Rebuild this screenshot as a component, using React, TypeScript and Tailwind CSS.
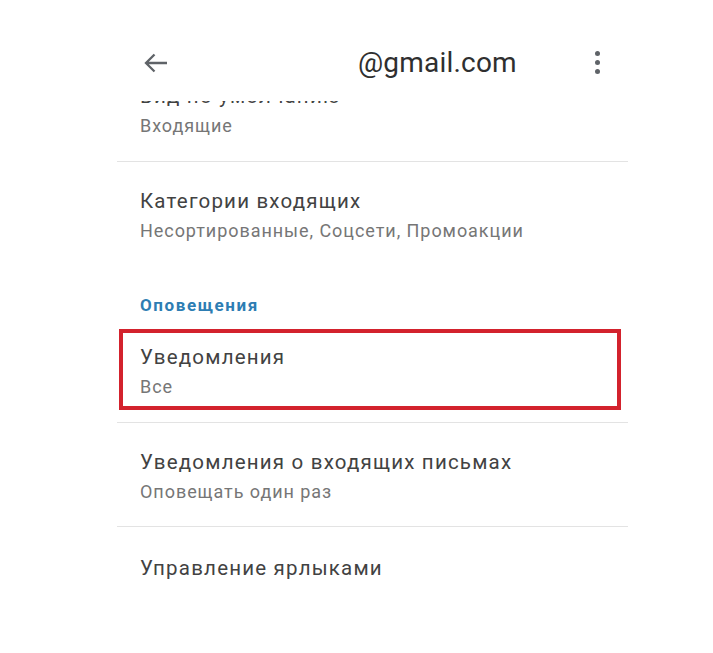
import React from 'react';

type Row = { title: string; sub?: string };

function Item({ row, divider = true, className = 'pt-[25px] pb-[20px]' }: { row: Row; divider?: boolean; className?: string }) {
  return (
    <div className={`${divider ? 'border-t border-[#e3e3e3]' : ''} pl-[23px] ${className}`}>
      <div className="text-[20.5px] leading-[29px] tracking-[1.2px] text-[#424242]">{row.title}</div>
      {row.sub && <div className="text-[18px] leading-[29px] tracking-[0.95px] text-[#767676]">{row.sub}</div>}
    </div>
  );
}

export default function App() {
  return (
    <div className="h-[653px] w-full overflow-hidden bg-white font-['Roboto',sans-serif]">
      <div className="ml-[117px] w-[511px]">
        <header className="relative z-10 flex h-[101px] items-center bg-white pt-[24px]">
          <svg width="24" height="20" viewBox="0 0 24 20" className="ml-[27px]" fill="none" stroke="#5f6368" strokeWidth="2.3">
            <path d="M23 10H2M10.5 1.5 2 10l8.5 8.5" />
          </svg>
          <div className="ml-[190px] text-[28px] leading-none tracking-[0.2px] text-[#2f2f2f]">@gmail.com</div>
          <div className="ml-auto mr-[28px] flex flex-col gap-[4px]">
            <span className="h-[5px] w-[5px] rounded-full bg-[#5f6368]" />
            <span className="h-[5px] w-[5px] rounded-full bg-[#5f6368]" />
            <span className="h-[5px] w-[5px] rounded-full bg-[#5f6368]" />
          </div>
        </header>

        <div className="-mt-[44px]">
          <Item row={{ title: 'Вид по умолчанию', sub: 'Входящие' }} divider={false} className="pt-[25px] pb-[21px]" />
          <Item row={{ title: 'Категории входящих', sub: 'Несортированные, Соцсети, Промоакции' }} />

          <div className="pl-[23px] pt-[28px] pb-[5px] text-[17px] leading-[24px] font-bold tracking-[1.6px] text-[#2d7db3]">
            Оповещения
          </div>

          <div className="relative">
            <Item row={{ title: 'Уведомления', sub: 'Все' }} divider={false} className="pt-[21px] pb-[21px]" />
            <div className="pointer-events-none absolute top-[7px] bottom-[12px] left-[2px] right-[7px] border-[4px] border-[#d3222d]" />
          </div>

          <Item row={{ title: 'Уведомления о входящих письмах', sub: 'Оповещать один раз' }} />
          <Item row={{ title: 'Управление ярлыками' }} className="pt-[27px] pb-[20px]" />
        </div>
      </div>
    </div>
  );
}
